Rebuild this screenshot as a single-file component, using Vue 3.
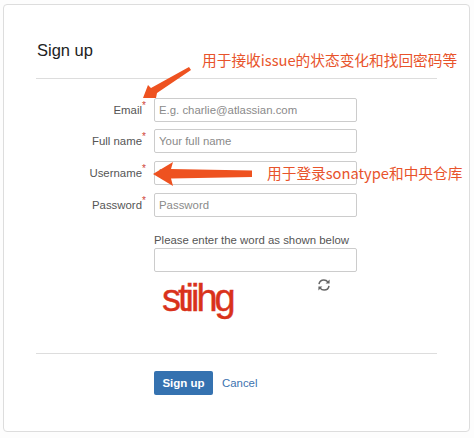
<script setup>
const fields = [
  { label: 'Email', placeholder: 'E.g. charlie@atlassian.com', type: 'text' },
  { label: 'Full name', placeholder: 'Your full name', type: 'text' },
  { label: 'Username', placeholder: 'Username', type: 'text' },
  { label: 'Password', placeholder: 'Password', type: 'text' },
]
</script>

<template>
  <div class="page">
    <main class="card">
      <h1 class="title">Sign up</h1>
      <form class="form" @submit.prevent>
        <div v-for="f in fields" :key="f.label" class="row">
          <label class="label">{{ f.label }}<span class="req">*</span></label>
          <input class="input" :type="f.type" :placeholder="f.placeholder" />
        </div>
        <div class="captcha">
          <div class="captcha-hint">Please enter the word as shown below</div>
          <input class="input" type="text" />
          <div class="captcha-media">
            <span class="captcha-word">stiihg</span>
            <svg class="refresh" viewBox="0 0 14 14" width="14" height="14" fill="none">
              <path d="M2 6.2C2.4 3.6 4.4 2 6.9 2c1.7 0 3 .7 3.9 1.9" stroke="#666" stroke-width="1.5" />
              <path d="M12 7.8c-.4 2.6-2.4 4.2-4.9 4.2-1.7 0-3-.7-3.9-1.9" stroke="#666" stroke-width="1.5" />
              <path d="M12.6 1.4v4h-4zM1.4 12.6v-4h4z" fill="#666" />
            </svg>
          </div>
        </div>
        <div class="actions">
          <button class="btn" type="button">Sign up</button>
          <a class="cancel" href="#">Cancel</a>
        </div>
      </form>
    </main>
    <svg class="arrows" viewBox="0 0 474 438" width="474" height="438">
      <polygon points="143,98 148,85 151,88 189,67 191,70 157,93 156,98" fill="#ee5220" />
      <polygon points="153,174 173,162 171,169 252,170.5 252,177 171,178.5 173,186" fill="#ee5220" />
    </svg>
    <div class="note note-a">用于接收issue的状态变化和找回密码等</div>
    <div class="note note-b">用于登录sonatype和中央仓库</div>
  </div>
</template>

<style>
html, body { margin: 0; background: #fdfdfd; }
</style>

<style scoped>
.page {
  position: relative;
  width: 474px;
  height: 438px;
  padding: 4px 4px 0 3px;
  box-sizing: border-box;
  font-family: "Liberation Sans", Arial, sans-serif;
  color: #333;
  overflow: hidden;
}
.card {
  box-sizing: border-box;
  width: 467px;
  height: 428px;
  background: #fff;
  border: 1px solid #ddd;
  border-radius: 4px;
  padding: 0 32px;
}
.title {
  margin: 0;
  height: 74px;
  box-sizing: border-box;
  padding: 34px 0 0 1px;
  border-bottom: 1px solid #ddd;
  font-size: 16.5px;
  line-height: 22px;
  font-weight: 400;
  color: #222;
}
.form {
  display: flex;
  flex-direction: column;
  padding-top: 18px;
}
.row {
  display: grid;
  grid-template-columns: 106px 203px;
  column-gap: 12px;
  align-items: center;
  height: 25px;
  margin-bottom: 6.7px;
}
.label {
  text-align: right;
  font-size: 11.4px;
  color: #555;
  position: relative;
  white-space: nowrap;
}
.req {
  position: absolute;
  right: -4px;
  top: -3px;
  color: #d04437;
  font-size: 10px;
  line-height: 10px;
}
.input {
  box-sizing: border-box;
  width: 203px;
  height: 24px;
  border: 1px solid #ccc;
  border-radius: 2px;
  padding: 0 4px;
  font: 11.4px "Liberation Sans", Arial, sans-serif;
  background: #fff;
  outline: none;
}
.input::placeholder { color: #8a8a8a; opacity: 1; }
.captcha {
  margin: 9px 0 0 118px;
  width: 203px;
}
.captcha-hint {
  font-size: 11.4px;
  line-height: 14px;
  color: #555;
  margin-bottom: 1px;
  white-space: nowrap;
}
.captcha-media {
  display: flex;
  justify-content: space-between;
  align-items: flex-start;
  height: 81px;
  padding: 6px 26px 0 8px;
  box-sizing: border-box;
}
.captcha-word {
  font-size: 38px;
  line-height: 38px;
  letter-spacing: -3px;
  color: #d9321b;
  margin-top: 1px;
  font-family: "Liberation Sans", Arial, sans-serif;
  -webkit-text-stroke: 0.4px #d9321b;
}
.actions {
  display: flex;
  align-items: center;
  gap: 9px;
  padding: 17px 0 0 118px;
  border-top: 1px solid #ddd;
}
.btn {
  width: 59px;
  height: 24px;
  border: 0;
  border-radius: 2px;
  background: #3572b0;
  color: #fff;
  font: 700 11.5px "Liberation Sans", Arial, sans-serif;
  padding: 0;
}
.cancel {
  color: #3b73af;
  font-size: 11.4px;
  text-decoration: none;
}
.arrows { position: absolute; left: 0; top: 0; pointer-events: none; }
.note {
  position: absolute;
  font-family: "Noto Sans CJK SC", "Liberation Sans", sans-serif;
  font-size: 14.7px;
  line-height: 20px;
  color: #e8532b;
  white-space: nowrap;
}
.note-a { left: 202px; top: 50px; }
.note-b { left: 267px; top: 163px; }
</style>
